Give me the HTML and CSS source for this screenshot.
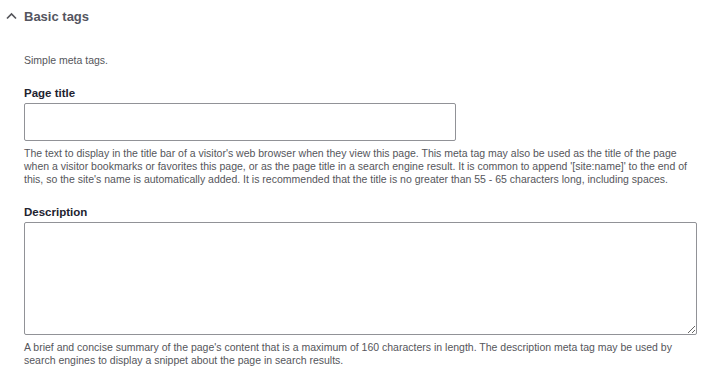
FILE: index.html
```html
<!DOCTYPE html>
<html>
<head>
<meta charset="utf-8">
<link rel="stylesheet" href="styles.css">
</head>
<body>
<details class="section" open>
  <summary class="summary">
    <svg class="chev" width="11" height="8" viewBox="0 0 11 8"><path d="M1 6.5 L5.5 2 L10 6.5" fill="none" stroke="#55565b" stroke-width="1.7"/></svg>
    <span class="summary-title">Basic tags</span>
  </summary>
  <div class="content">
    <p class="intro">Simple meta tags.</p>
    <div class="field">
      <label class="label">Page title</label>
      <input class="text-input" type="text">
      <div class="help">The text to display in the title bar of a visitor's web browser when they view this page. This meta tag may also be used as the title of the page when a visitor bookmarks or favorites this page, or as the page title in a search engine result. It is common to append '[site:name]' to the end of this, so the site's name is automatically added. It is recommended that the title is no greater than 55 - 65 characters long, including spaces.</div>
    </div>
    <div class="field">
      <label class="label">Description</label>
      <textarea class="textarea"></textarea>
      <div class="help">A brief and concise summary of the page's content that is a maximum of 160 characters in length. The description meta tag may be used by search engines to display a snippet about the page in search results.</div>
    </div>
  </div>
</details>
</body>
</html>
```
FILE: styles.css
```css
html, body {
  margin: 0;
  padding: 0;
  background: #fff;
}
body {
  font-family: "Liberation Sans", Arial, sans-serif;
  color: #55565b;
  width: 720px;
  overflow: hidden;
}
.section {
  display: block;
}
.summary {
  list-style: none;
  display: flex;
  align-items: center;
  height: 32px;
  padding-left: 6px;
  cursor: pointer;
}
.summary::-webkit-details-marker { display: none; }
.chev {
  display: block;
  margin-right: 7px;
  margin-top: -1px;
}
.summary-title {
  font-size: 13px;
  font-weight: bold;
  color: #545560;
}
.content {
  padding: 22px 0 0 24px;
}
.intro {
  margin: 0 0 19px;
  font-size: 10.5px;
  line-height: 13px;
}
.field {
  margin-bottom: 19px;
}
.label {
  display: block;
  font-size: 11.5px;
  font-weight: bold;
  color: #222330;
  line-height: 14px;
  margin-bottom: 3px;
}
.text-input {
  display: block;
  box-sizing: border-box;
  width: 432px;
  height: 38px;
  margin: 0;
  border: 1px solid #919297;
  border-radius: 2px;
  background: #fff;
}
.textarea {
  display: block;
  box-sizing: border-box;
  width: 673px;
  height: 113px;
  margin: 0;
  border: 1px solid #919297;
  border-radius: 2px;
  background: #fff;
  resize: both;
}
.help {
  margin-top: 6px;
  font-size: 10.5px;
  line-height: 13px;
  width: 680px;
}
```
